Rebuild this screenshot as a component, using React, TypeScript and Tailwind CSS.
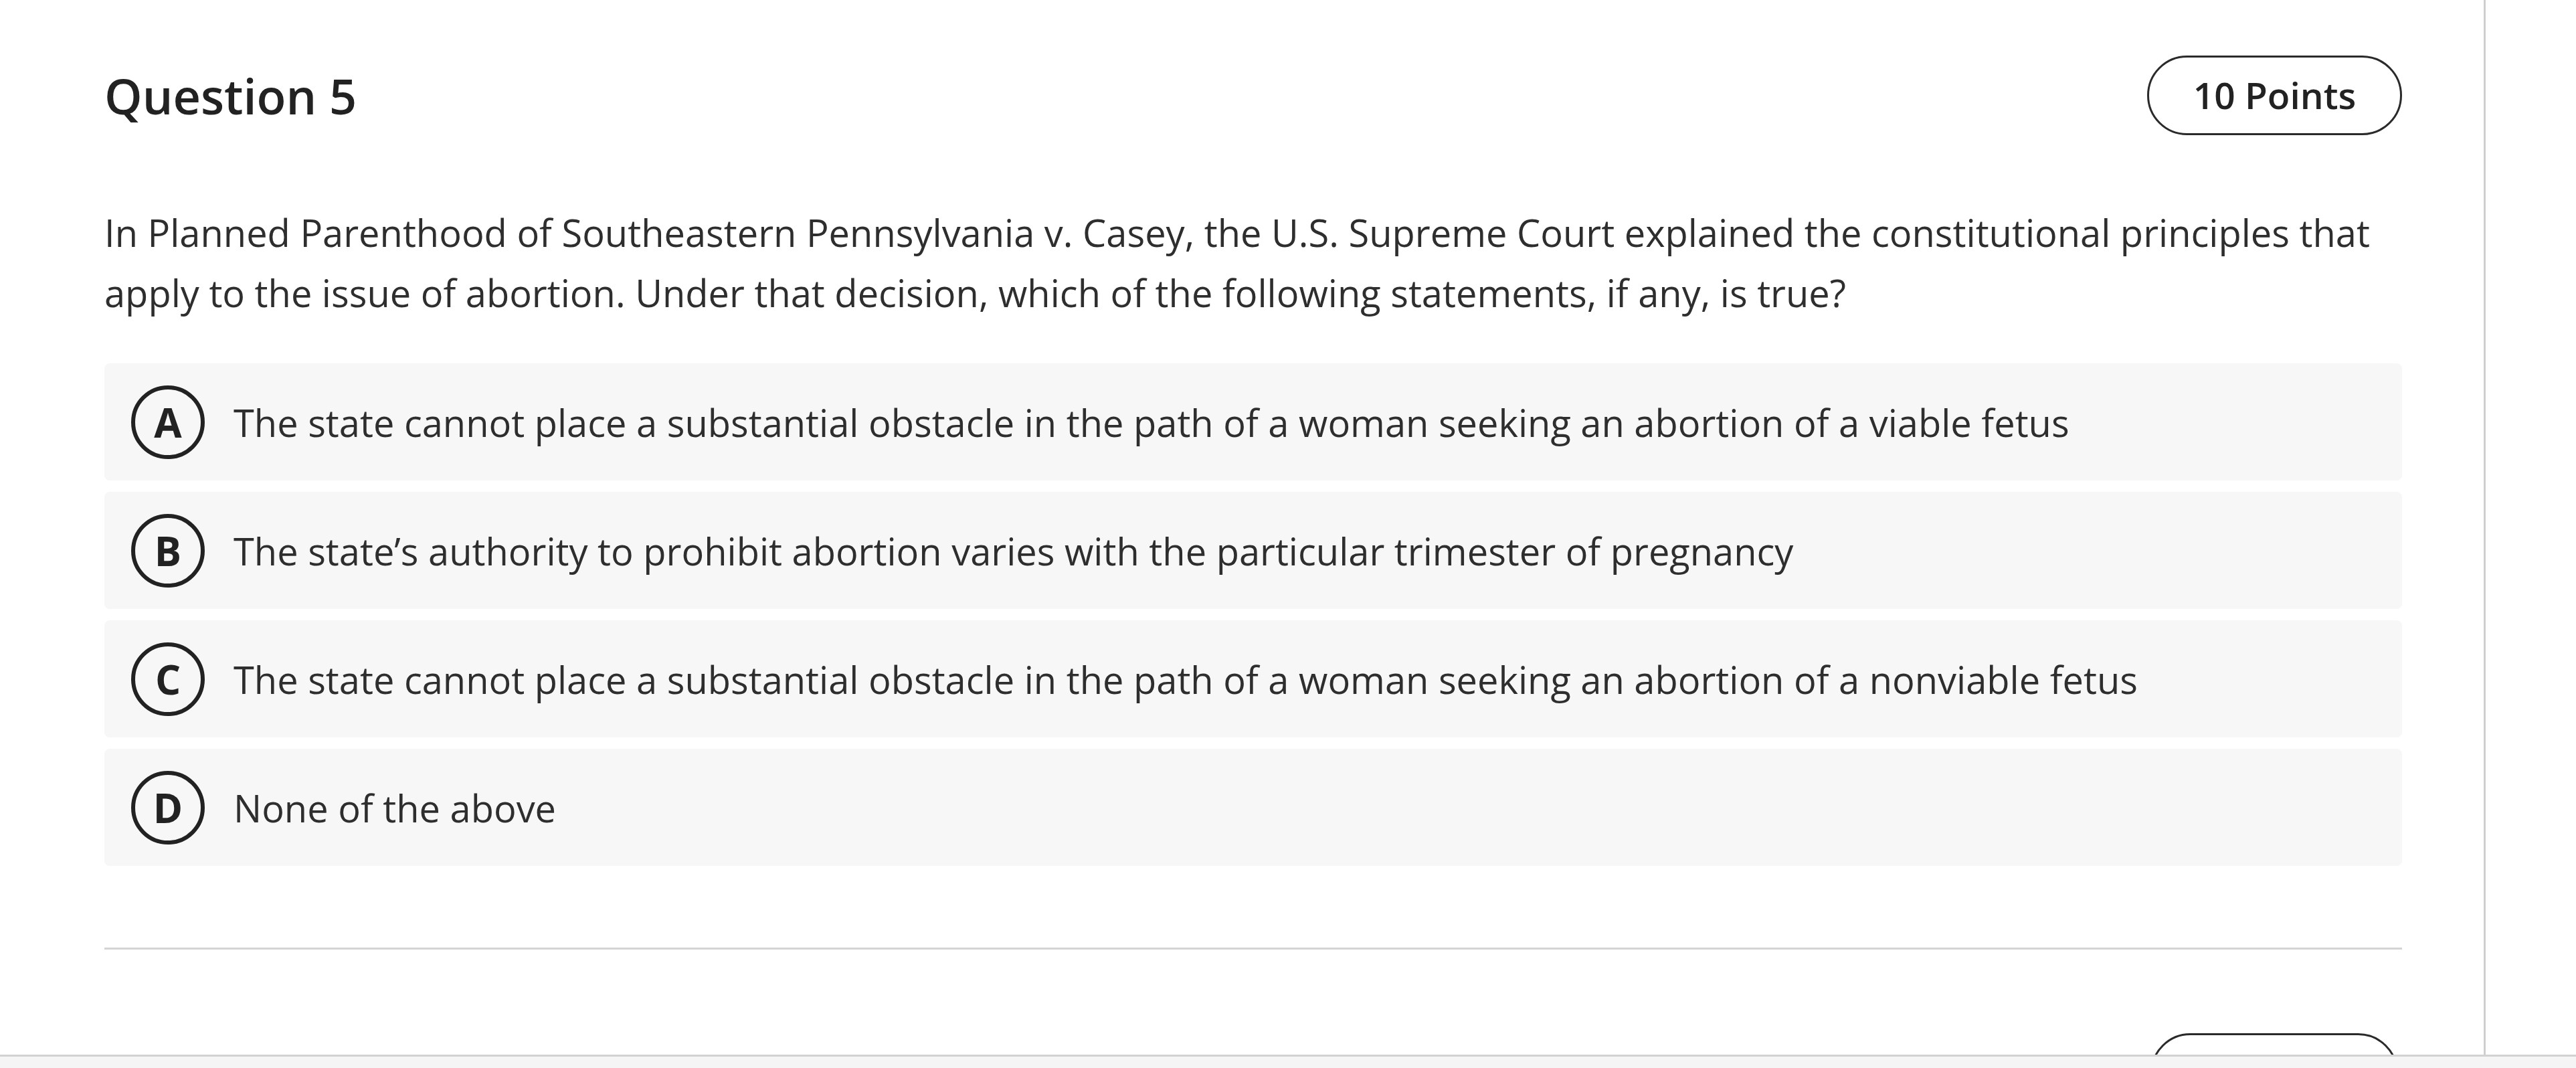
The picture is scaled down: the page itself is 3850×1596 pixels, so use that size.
import React from "react";

type Choice = { key: string; text: string };

const choices: Choice[] = [
  {
    key: "A",
    text: "The state cannot place a substantial obstacle in the path of a woman seeking an abortion of a viable fetus",
  },
  {
    key: "B",
    text: "The state\u2019s authority to prohibit abortion varies with the particular trimester of pregnancy",
  },
  {
    key: "C",
    text: "The state cannot place a substantial obstacle in the path of a woman seeking an abortion of a nonviable fetus",
  },
  { key: "D", text: "None of the above" },
];

function ChoiceRow({ choice }: { choice: Choice }) {
  return (
    <div className="flex h-[175px] items-center rounded-[8px] bg-[#f7f7f7] pl-[40px]">
      {/* letter badge */}
      <span className="flex h-[110px] w-[110px] shrink-0 items-center justify-center rounded-full border-[6px] border-[#222] text-[60px] font-bold leading-none text-[#222]">
        {choice.key}
      </span>
      <span className="ml-[43px] text-[56px] leading-[90px] text-[#2e2e2e]">
        {choice.text}
      </span>
    </div>
  );
}

export default function App() {
  return (
    <div className="flex h-[1596px] w-[3850px] flex-col overflow-hidden bg-white font-['Open_Sans',sans-serif]">
      <div className="flex h-[1579px] shrink-0 border-b-[3px] border-[#d2d2d2]">
        <main className="h-full w-[3715px] shrink-0 overflow-hidden border-r-[3px] border-[#cfcfcf] pl-[156px] pr-[122px]">
          {/* header */}
          <div className="flex items-center justify-between pt-[83px]">
            <h1 className="text-[72px] font-semibold leading-none text-[#222]">
              Question 5
            </h1>
            <span className="flex h-[119px] w-[381px] items-center justify-center rounded-full border-[3px] border-[#2a2a2a] text-[55px] font-semibold text-[#222]">
              10 Points
            </span>
          </div>

          <p className="mt-[100px] text-[56px] leading-[90px] text-[#2e2e2e]">
            In Planned Parenthood of Southeastern Pennsylvania v. Casey, the U.S. Supreme Court
            explained the constitutional principles that apply to the issue of abortion. Under that
            decision, which of the following statements, if any, is true?
          </p>

          <div className="mt-[61px] flex flex-col gap-[17px]">
            {choices.map((c) => (
              <ChoiceRow key={c.key} choice={c} />
            ))}
          </div>

          <div className="mt-[122px] h-[3px] bg-[#d4d4d4]" />

          {/* next button, mostly below the fold */}
          <div className="mt-[125px] flex justify-end pr-[6px]">
            <button
              aria-label="Next"
              className="h-[119px] w-[370px] rounded-full border-[3px] border-[#2a2a2a]"
            />
          </div>
        </main>
        <div className="flex-1" />
      </div>
      <div className="flex-1 bg-[#f5f5f5]" />
    </div>
  );
}
